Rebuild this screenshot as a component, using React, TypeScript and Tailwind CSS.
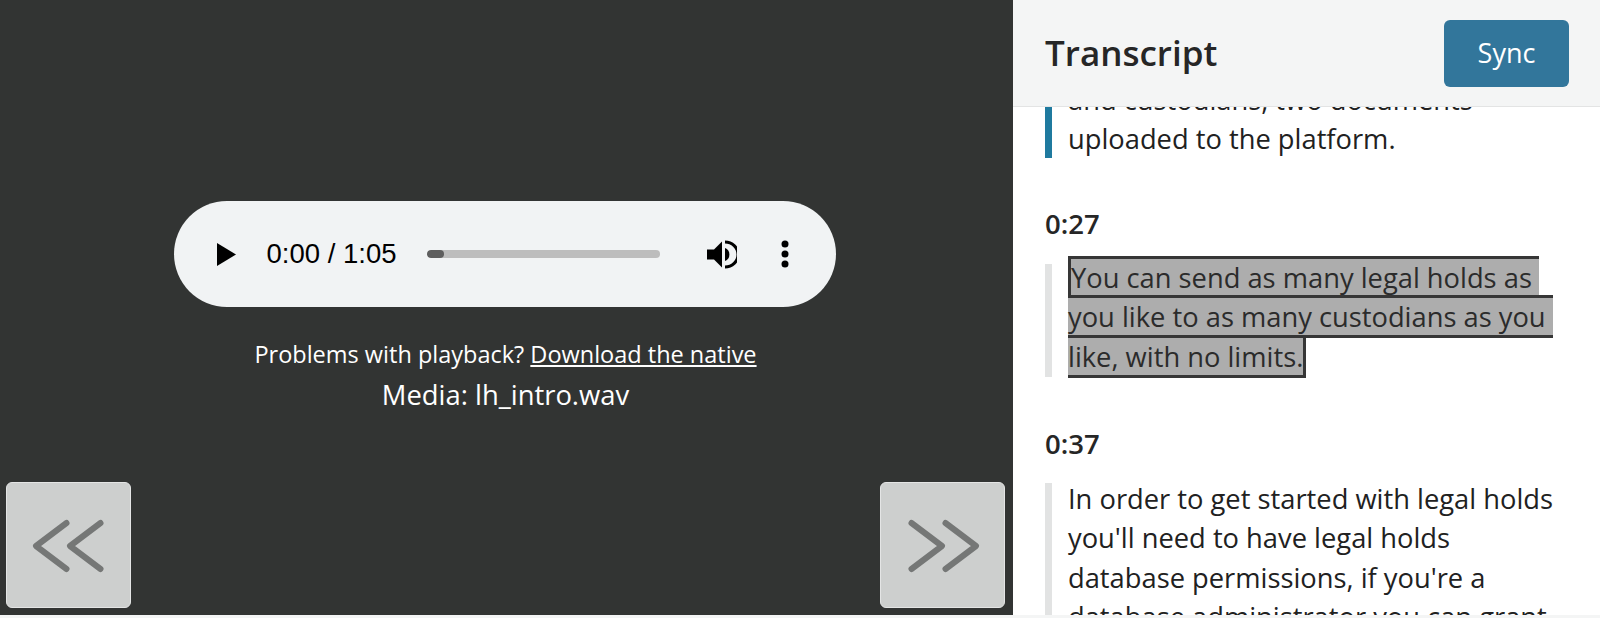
import React from "react";

const Chevrons = ({ flip }: { flip?: boolean }) => (
  <svg width="76" height="58" viewBox="0 0 76 58" fill="none" stroke="#757776" strokeWidth="6" strokeLinecap="round" strokeLinejoin="round" className={flip ? "-scale-x-100" : ""}>
    <path d="M35.5 7 L5 30 L35.5 53" />
    <path d="M69.5 7 L39 30 L69.5 53" />
  </svg>
);

export default function App() {
  return (
    <div className="w-[1600px] h-[618px] bg-[#f4f5f5] overflow-hidden flex flex-col font-['Open_Sans','Noto_Sans',sans-serif]">
      <div className="flex h-[615px]">
        <div className="w-[1013px] bg-[#323433] flex flex-col justify-between pl-[6px] pr-[8px] pb-[7px]">
          <div className="flex flex-col items-center pt-[201px] pr-[2px]">
            <div className="w-[662px] h-[106px] rounded-[53px] bg-[#f1f3f4] flex items-center pl-[43px] text-black">
              <svg width="19" height="23" viewBox="0 0 19 23" className="shrink-0"><path d="M0 0 L19 11.5 L0 23 Z" fill="#000" /></svg>
              <span className="ml-[31px] text-[27.5px] font-['Liberation_Sans',sans-serif] w-[130px] whitespace-nowrap">0:00 / 1:05</span>
              <div className="ml-[30px] w-[233px] h-[8px] rounded-full bg-[#bdbdbd] overflow-hidden">
                <div className="w-[17px] h-full rounded-full bg-[#5e5e5e]" />
              </div>
              <svg width="30" height="29" viewBox="0 0 30 29" className="ml-[47px] shrink-0" fill="#000">
                <path d="M0 9.5 H7 L15 1.5 V27.5 L7 19.5 H0 Z" />
                <path d="M18 8 a7 7 0 0 1 0 13 Z" />
                <path d="M18 0.5 a14.5 14 0 0 1 0 28 v-3 a11.5 11 0 0 0 0 -22 Z" />
              </svg>
              <svg width="8" height="28" viewBox="0 0 8 28" className="ml-[44px] shrink-0" fill="#000">
                <circle cx="4" cy="4" r="3.5" /><circle cx="4" cy="14" r="3.5" /><circle cx="4" cy="24" r="3.5" />
              </svg>
            </div>
            <p className="mt-[32px] pl-[2px] text-white text-[23.5px] leading-[30px] whitespace-nowrap">Problems with playback? <a className="underline">Download the native</a></p>
            <p className="mt-[9px] pl-[2px] text-white text-[27.4px] leading-[34px] whitespace-nowrap">Media: lh_intro.wav</p>
          </div>
          <div className="flex justify-between">
            <button className="w-[125px] h-[126px] rounded-[6px] bg-[#cdcfce] border border-[#e4e5e5] flex items-center justify-center"><Chevrons /></button>
            <button className="w-[125px] h-[126px] rounded-[6px] bg-[#cdcfce] border border-[#e4e5e5] flex items-center justify-center"><Chevrons flip /></button>
          </div>
        </div>
        <div className="flex-1 bg-white flex flex-col overflow-hidden">
          <div className="h-[107px] shrink-0 bg-[#f4f5f5] border-b border-[#e3e4e4] flex items-center justify-between pl-[32px] pr-[31px]">
            <h2 className="text-[35px] font-semibold text-[#262626]">Transcript</h2>
            <button className="w-[125px] h-[67px] rounded-[6px] bg-[#32769b] text-white text-[27px]">Sync</button>
          </div>
          <div className="flex-1 overflow-hidden pl-[32px] pr-[32px] text-[27.3px] leading-[39.4px] text-[#212121]">
            <div className="border-l-[7px] border-[#1f7a9f] pl-[16px] -mt-[27px] h-[78px] overflow-hidden">
              <p>and custodians, two documents uploaded to the platform.</p>
            </div>
            <h3 className="mt-[46px] font-semibold text-[27.5px] leading-[40px] text-[#262626]">0:27</h3>
            <div className="flow-root border-l-[7px] border-[#e2e3e3] pl-[16px] mt-[20px] h-[113px]">
              <p className="-mt-[6px]"><mark className="bg-[#adadad] text-[#2b2b2b] border-[3px] border-[#000000b0] whitespace-pre-wrap">You can send as many legal holds as you like to as many custodians as you like, with no limits.</mark></p>
            </div>
            <h3 className="mt-[47px] font-semibold text-[27.5px] leading-[40px] text-[#262626]">0:37</h3>
            <div className="flow-root border-l-[7px] border-[#e2e3e3] pl-[16px] mt-[19px]">
              <p className="-mt-[4px]">In order to get started with legal holds you'll need to have legal holds database permissions, if you're a database administrator you can grant</p>
            </div>
          </div>
        </div>
      </div>
    </div>
  );
}
